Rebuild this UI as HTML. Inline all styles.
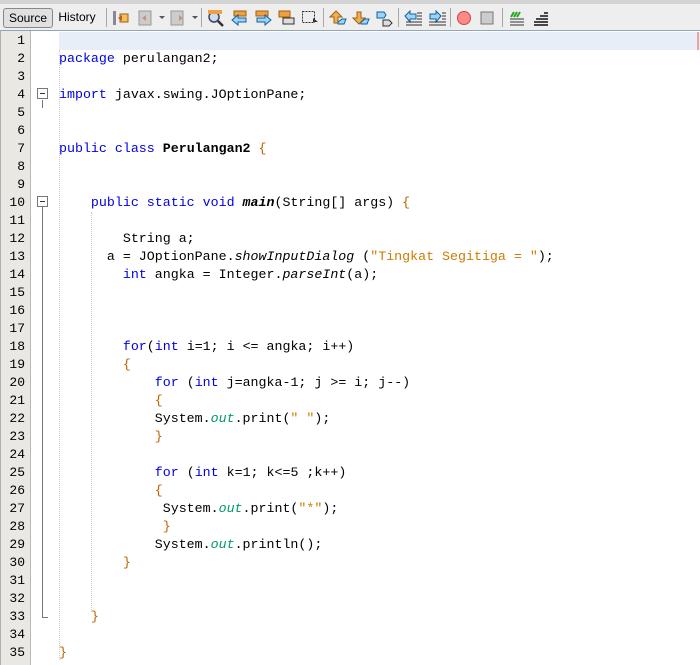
<!DOCTYPE html>
<html><head><style>
body{margin:0;width:700px;height:665px;overflow:hidden;background:#fff;font-family:"Liberation Sans",sans-serif;position:relative}
#top{position:absolute;left:0;top:0;width:700px;height:4px;background:#d4d4d4;border-bottom:1px solid #a0a0a0}
#tb{position:absolute;left:0;top:4px;width:700px;height:26px;background:#eeeeee;border-bottom:1px solid #8fa4bd}
.btn{position:absolute;top:4px;height:18px;font-size:12px;line-height:18px;text-align:center}
.sep{position:absolute;top:4px;width:1px;height:19px;background:#a8a8a8}
.ic{position:absolute;top:6px}
#gut{position:absolute;left:0;top:31px;width:29px;height:634px;background:#e9e8e2;border-right:1px solid #b8b8b8;border-left:1px solid #b0b0b0}
.ln{position:absolute;left:0;width:25px;text-align:right;font:13px "Liberation Mono",monospace;color:#000;line-height:18px}
.cl{position:absolute;left:59px;font:13.3px "Liberation Mono",monospace;white-space:pre;color:#000;line-height:18px}
.k{color:#0000e6}.s{color:#ce7b00}.g{color:#009966;font-style:italic}.i{font-style:italic}.b{font-weight:bold}.o{color:#c06000}
.fold{position:absolute;left:37px;width:9px;height:9px;border:1px solid #777;background:#fff}
.fold:after{content:"";position:absolute;left:2px;top:4px;width:5px;height:1px;background:#333}
</style></head><body>
<div id="top"></div>
<div id="tb">
<div class="btn" style="left:3px;width:48px;border:1px solid #888;border-radius:3px;background:#e0e0e0">Source</div>
<div class="btn" style="left:56px;width:42px">History</div>
<div class="sep" style="left:106px"></div>
<svg class="ic" style="left:112px" width="20" height="16"><rect x="1" y="1" width="3" height="14" fill="#889"/><path d="M8 4h8v8h-8z" fill="#f0c060" stroke="#a06010"/><path d="M6 8l4-3v6z" fill="#c06010"/></svg>
<svg class="ic" style="left:137px" width="20" height="16"><rect x="2" y="1" width="12" height="14" fill="#ccc" stroke="#999"/><path d="M5 8l4-3v6z" fill="#b98"/></svg>
<div style="position:absolute;left:159px;top:12px;border:3px solid transparent;border-top:3px solid #555"></div>
<svg class="ic" style="left:169px" width="20" height="16"><rect x="2" y="1" width="12" height="14" fill="#ccc" stroke="#999"/><path d="M14 8l-4-3v6z" fill="#b98"/></svg>
<div style="position:absolute;left:192px;top:12px;border:3px solid transparent;border-top:3px solid #555"></div>
<div class="sep" style="left:201px"></div>
<svg class="ic" style="left:207px" width="18" height="18"><circle cx="7" cy="7" r="5" fill="#cde" stroke="#446" stroke-width="1.5"/><path d="M11 11l5 5" stroke="#333" stroke-width="2.5"/><rect x="1" y="0" width="14" height="4" fill="#f0a040"/></svg>
<svg class="ic" style="left:231px" width="18" height="16"><rect x="3" y="1" width="12" height="5" fill="#f0a040" stroke="#a06010"/><path d="M1 10l6-5v3h8v4h-8v3z" fill="#9cd4f8" stroke="#1060a0"/></svg>
<svg class="ic" style="left:254px" width="18" height="16"><rect x="2" y="1" width="12" height="5" fill="#f0a040" stroke="#a06010"/><path d="M17 10l-6-5v3h-8v4h8v3z" fill="#9cd4f8" stroke="#1060a0"/></svg>
<svg class="ic" style="left:278px" width="18" height="16"><rect x="1" y="1" width="11" height="6" fill="#f0a040" stroke="#a06010"/><rect x="5" y="8" width="11" height="6" fill="#ddd" stroke="#333"/></svg>
<svg class="ic" style="left:301px" width="18" height="16"><rect x="1.5" y="1.5" width="12" height="11" fill="none" stroke="#333" stroke-dasharray="2 1"/><path d="M12 8l5 4h-5z" fill="#333"/></svg>
<div class="sep" style="left:323px"></div>
<svg class="ic" style="left:329px" width="18" height="18"><path d="M7 1l-6 6h4v6h4v-6h4z" fill="#f0b050" stroke="#a06010"/><path d="M9 12l4-3h4l-2 5h-6z" fill="#9cd4f8" stroke="#1060a0"/></svg>
<svg class="ic" style="left:352px" width="18" height="18"><path d="M7 14l-6-6h4v-6h4v6h4z" fill="#f0b050" stroke="#a06010"/><path d="M9 12l4-3h4l-2 5h-6z" fill="#9cd4f8" stroke="#1060a0"/></svg>
<svg class="ic" style="left:375px" width="18" height="18"><path d="M2 2h7l2 3-2 3h-7z" fill="#9cd4f8" stroke="#1060a0"/><path d="M8 10h6l3 3-3 3h-6z" fill="#ddd" stroke="#333"/></svg>
<div class="sep" style="left:398px"></div>
<svg class="ic" style="left:404px" width="20" height="16"><path d="M1 6l5-5v3h6v5h-6v3z" fill="#9cd4f8" stroke="#1060a0"/><path d="M13 3h5M13 6h5M13 9h5M2 12h16M2 15h16" stroke="#333"/></svg>
<svg class="ic" style="left:427px" width="20" height="16"><path d="M14 6l-5-5v3h-6v5h6v3z" fill="#9cd4f8" stroke="#1060a0"/><path d="M15 3h4M15 6h4M15 9h4M2 12h17M2 15h17" stroke="#333"/></svg>
<div class="sep" style="left:450px"></div>
<svg class="ic" style="left:456px" width="16" height="16"><circle cx="8" cy="8" r="6.5" fill="#f88" stroke="#c44"/></svg>
<svg class="ic" style="left:479px" width="16" height="16"><rect x="2" y="2" width="12" height="12" fill="#ccc" stroke="#777"/></svg>
<div class="sep" style="left:502px"></div>
<svg class="ic" style="left:508px" width="18" height="16"><path d="M3 7l3-5M6 7l3-5M9 7l3-5" stroke="#2a2" stroke-width="2"/><path d="M2 9h14M2 12h14M2 15h14" stroke="#333"/></svg>
<svg class="ic" style="left:532px" width="18" height="16"><path d="M12 3h4M8 6h8M4 9h12M2 12h14M2 15h14" stroke="#111" stroke-width="1.5"/></svg>
</div>
<div id="gut"></div>
<div style="position:absolute;left:59px;top:32px;width:641px;height:18px;background:#e8eef8"></div>
<div style="position:absolute;left:697px;top:32px;width:2px;height:18px;background:#f0a0a0"></div>
<div style="position:absolute;left:59px;top:50px;height:610px;border-left:1px dotted #ccc"></div>
<div style="position:absolute;left:91px;top:212px;height:400px;border-left:1px dotted #ccc"></div>
<div style="position:absolute;left:42px;top:100px;width:1px;height:8px;background:#777"></div>
<div class="fold" style="top:88px"></div>
<div class="fold" style="top:196px"></div>
<div style="position:absolute;left:42px;top:207px;width:1px;height:410px;background:#777"></div>
<div style="position:absolute;left:42px;top:617px;width:6px;height:1px;background:#777"></div>
<div style="position:absolute;left:0;top:32px">
<div class="ln" style="top:0">1</div><div class="ln" style="top:18px">2</div><div class="ln" style="top:36px">3</div><div class="ln" style="top:54px">4</div><div class="ln" style="top:72px">5</div><div class="ln" style="top:90px">6</div><div class="ln" style="top:108px">7</div><div class="ln" style="top:126px">8</div><div class="ln" style="top:144px">9</div><div class="ln" style="top:162px">10</div><div class="ln" style="top:180px">11</div><div class="ln" style="top:198px">12</div><div class="ln" style="top:216px">13</div><div class="ln" style="top:234px">14</div><div class="ln" style="top:252px">15</div><div class="ln" style="top:270px">16</div><div class="ln" style="top:288px">17</div><div class="ln" style="top:306px">18</div><div class="ln" style="top:324px">19</div><div class="ln" style="top:342px">20</div><div class="ln" style="top:360px">21</div><div class="ln" style="top:378px">22</div><div class="ln" style="top:396px">23</div><div class="ln" style="top:414px">24</div><div class="ln" style="top:432px">25</div><div class="ln" style="top:450px">26</div><div class="ln" style="top:468px">27</div><div class="ln" style="top:486px">28</div><div class="ln" style="top:504px">29</div><div class="ln" style="top:522px">30</div><div class="ln" style="top:540px">31</div><div class="ln" style="top:558px">32</div><div class="ln" style="top:576px">33</div><div class="ln" style="top:594px">34</div><div class="ln" style="top:612px">35</div>
</div>
<div class="cl" style="top:32px">&#8203;
<span class="k">package</span> perulangan2;

<span class="k">import</span> javax.swing.JOptionPane;


<span class="k">public class</span> <span class="b">Perulangan2</span> <span class="o">{</span>


    <span class="k">public static void</span> <span class="b i">main</span>(String[] args) <span class="o">{</span>

        String a;
      a = JOptionPane.<span class="i">showInputDialog</span> (<span class="s">"Tingkat Segitiga = "</span>);
        <span class="k">int</span> angka = Integer.<span class="i">parseInt</span>(a);



        <span class="k">for</span>(<span class="k">int</span> i=1; i &lt;= angka; i++)
        <span class="o">{</span>
            <span class="k">for</span> (<span class="k">int</span> j=angka-1; j &gt;= i; j--)
            <span class="o">{</span>
            System.<span class="g">out</span>.print(<span class="s">" "</span>);
            <span class="o">}</span>

            <span class="k">for</span> (<span class="k">int</span> k=1; k&lt;=5 ;k++)
            <span class="o">{</span>
             System.<span class="g">out</span>.print(<span class="s">"*"</span>);
             <span class="o">}</span>
            System.<span class="g">out</span>.println();
        <span class="o">}</span>


    <span class="o">}</span>

<span class="o">}</span>
</div>
</body></html>
